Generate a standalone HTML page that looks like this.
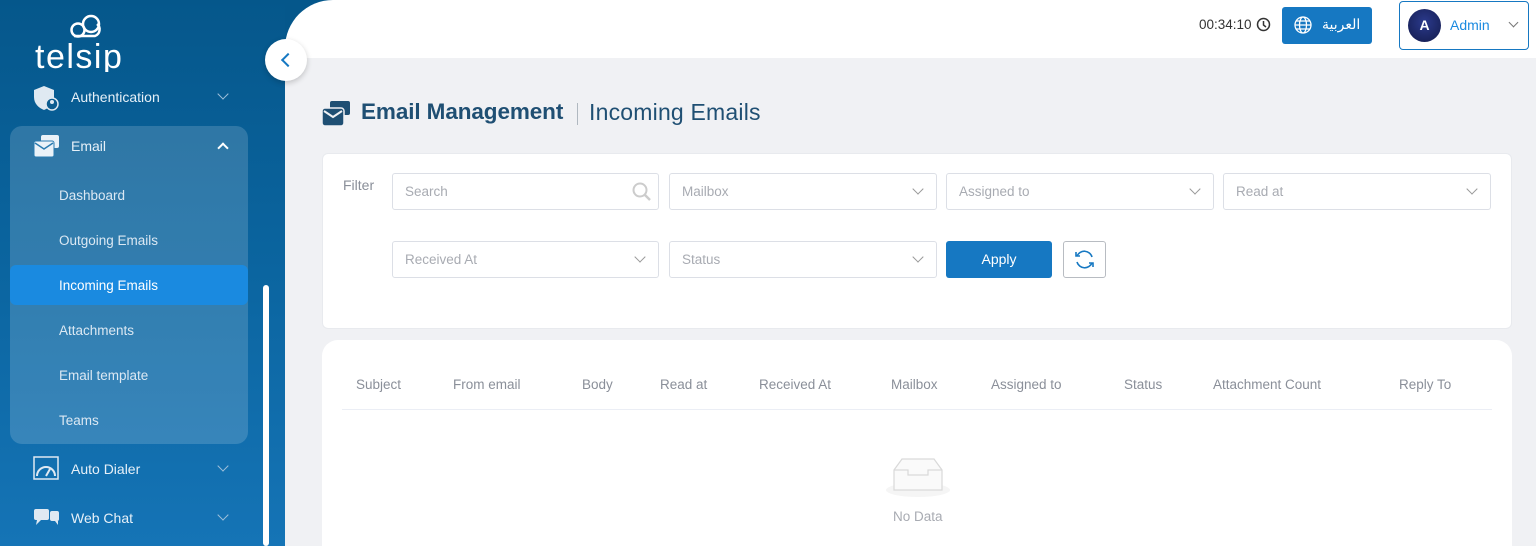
<!DOCTYPE html><html><head><meta charset="utf-8"><style>
*{box-sizing:border-box;margin:0;padding:0}
html,body{width:1536px;height:546px;overflow:hidden}
body{background:#f0f1f4;font-family:"Liberation Sans","Noto Sans CJK SC",sans-serif;position:relative}
.sb{position:absolute;left:0;top:0;width:285px;height:546px;background:linear-gradient(180deg,#05578b 0%,#0b65a0 50%,#1574b6 100%)}
.hdr{position:absolute;left:285px;top:0;width:1251px;height:58px;background:#fff;border-top-left-radius:48px}
.abs{position:absolute}
.mi{position:absolute;left:71px;color:#e6f0f8;font-size:14px}
.chev{position:absolute;left:219px;width:8px;height:8px;border-right:1.5px solid #9fc0da;border-bottom:1.5px solid #9fc0da;transform:rotate(45deg)}
.sub{position:absolute;left:59px;color:#dbe8f3;font-size:13.5px}
.inp{position:absolute;height:37px;border:1px solid #dcdfe6;border-radius:3px;background:#fff;color:#a8abb2;font-size:13.5px;padding:10px 12px}
.inp .c{position:absolute;right:14px;top:11px;width:8px;height:8px;border-right:1px solid #999;border-bottom:1px solid #999;transform:rotate(45deg)}
.th{position:absolute;top:377px;color:#8a8f99;font-size:13.5px}
</style></head><body>
<div class="sb"></div>
<div class="abs" style="left:285px;top:0;width:50px;height:58px;background:#05578b"></div>
<div class="hdr"></div>
<!-- logo -->
<svg class="abs" style="left:30px;top:12px" width="110" height="60" viewBox="0 0 110 60"><g fill="none" stroke="#fff" stroke-width="2.5"><circle cx="48" cy="18" r="6.5"/><circle cx="61" cy="12" r="8"/><path d="M44 24h21a7 7 0 0 0 2-12"/></g><text x="5" y="56" fill="#fff" font-size="34" font-family="Liberation Sans" letter-spacing="1.5">telsip</text></svg>
<!-- collapse -->
<div class="abs" style="left:265px;top:39px;width:42px;height:42px;border-radius:50%;background:#fff;box-shadow:0 2px 6px rgba(0,0,0,.2)"></div>
<div class="abs" style="left:283px;top:55px;width:10px;height:10px;border-left:2px solid #1678c2;border-bottom:2px solid #1678c2;transform:rotate(45deg)"></div>
<!-- menu -->
<svg class="abs" style="left:33px;top:85px" width="26" height="26"><path d="M11 1l10 4v7c0 7-5 11-10 13C6 23 1 19 1 12V5z" fill="#dfe9f2"/><circle cx="19" cy="19" r="6" fill="#0c5c90" stroke="#dfe9f2" stroke-width="1.5"/><circle cx="19" cy="17" r="2" fill="#dfe9f2"/></svg>
<div class="mi" style="top:89px">Authentication</div><div class="chev" style="top:90px"></div>
<div class="abs" style="left:10px;top:126px;width:238px;height:318px;border-radius:12px;background:rgba(255,255,255,.16)"></div>
<svg class="abs" style="left:33px;top:134px" width="27" height="25"><rect x="8" y="1" width="18" height="13" rx="2" fill="#eaf2f8"/><rect x="1" y="7" width="20" height="16" rx="2" fill="#eaf2f8" stroke="#2a7bb0"/><path d="M2 9l9 6 9-6" stroke="#2a7bb0" fill="none" stroke-width="1.5"/></svg>
<div class="mi" style="top:138px">Email</div><div class="abs" style="left:219px;top:144px;width:8px;height:8px;border-left:2px solid #fff;border-top:2px solid #fff;transform:rotate(45deg)"></div>
<div class="sub" style="top:188px">Dashboard</div>
<div class="sub" style="top:233px">Outgoing Emails</div>
<div class="abs" style="left:10px;top:265px;width:238px;height:40px;border-radius:6px;background:#1a8ae0"></div>
<div class="sub" style="top:278px;color:#fff">Incoming Emails</div>
<div class="sub" style="top:323px">Attachments</div>
<div class="sub" style="top:368px">Email template</div>
<div class="sub" style="top:413px">Teams</div>
<svg class="abs" style="left:33px;top:456px" width="26" height="26"><rect x="1" y="1" width="24" height="22" fill="none" stroke="#dfe9f2" stroke-width="1.5"/><path d="M4 20a9 9 0 0 1 18 0" fill="none" stroke="#dfe9f2" stroke-width="2"/><path d="M13 20l4-7" stroke="#dfe9f2" stroke-width="2"/></svg>
<div class="mi" style="top:461px">Auto Dialer</div><div class="chev" style="top:462px"></div>
<svg class="abs" style="left:33px;top:507px" width="27" height="22"><rect x="1" y="2" width="15" height="11" rx="2" fill="#dfe9f2"/><path d="M4 13l-1 5 5-5z" fill="#dfe9f2"/><rect x="17" y="4" width="9" height="10" rx="2" fill="#dfe9f2"/><path d="M22 14l3 4v-4z" fill="#dfe9f2"/></svg>
<div class="mi" style="top:510px">Web Chat</div><div class="chev" style="top:511px"></div>
<div class="abs" style="left:263px;top:285px;width:6px;height:261px;background:#fff;border-radius:3px"></div>
<!-- header right -->
<div class="abs" style="left:1199px;top:17px;font-size:13.5px;color:#333">00:34:10</div>
<svg class="abs" style="left:1256px;top:17px" width="15" height="15"><circle cx="7.5" cy="7.5" r="6" fill="none" stroke="#333" stroke-width="1.5"/><path d="M7.5 4v4l2.5 2" stroke="#333" fill="none" stroke-width="1.5"/></svg>
<div class="abs" style="left:1282px;top:7px;width:90px;height:37px;background:#1678c2;border-radius:3px"></div>
<svg class="abs" style="left:1294px;top:16px" width="18" height="18"><g fill="none" stroke="#fff" stroke-width="1.3"><circle cx="9" cy="9" r="8"/><ellipse cx="9" cy="9" rx="3.5" ry="8"/><path d="M1 9h16M2 5h14M2 13h14"/></g></svg>
<div class="abs" style="left:1322px;top:16px;color:#fff;font-size:14px">العربية</div>
<div class="abs" style="left:1399px;top:1px;width:130px;height:49px;border:1px solid #1678c2;border-radius:4px;background:#fff"></div>
<div class="abs" style="left:1408px;top:9px;width:33px;height:33px;border-radius:50%;background:radial-gradient(circle at 50% 40%,#2b3a8c,#121a4a);color:#fff;font-weight:bold;font-size:14px;text-align:center;line-height:33px">A</div>
<div class="abs" style="left:1450px;top:17px;color:#1a8ae0;font-size:14px">Admin</div>
<div class="abs" style="left:1510px;top:19px;width:7px;height:7px;border-right:1px solid #777;border-bottom:1px solid #777;transform:rotate(45deg)"></div>
<!-- title -->
<svg class="abs" style="left:321px;top:100px" width="30" height="28"><rect x="9" y="1" width="20" height="14" rx="2" fill="#1f4f73"/><rect x="1" y="8" width="22" height="18" rx="3" fill="#1f4f73" stroke="#f0f1f4" stroke-width="1.5"/><path d="M3 11l9 6 9-6" stroke="#f0f1f4" fill="none" stroke-width="2"/></svg>
<div class="abs" style="left:361px;top:99px;font-size:22.5px;font-weight:bold;color:#1f4f73;letter-spacing:-.1px">Email Management</div>
<div class="abs" style="left:577px;top:103px;width:1px;height:22px;background:#b0b8c0"></div>
<div class="abs" style="left:589px;top:99px;font-size:23px;color:#1f4f73;letter-spacing:.2px">Incoming Emails</div>
<!-- filter card -->
<div class="abs" style="left:322px;top:153px;width:1190px;height:176px;background:#fff;border-radius:6px;border:1px solid #e8eaee"></div>
<div class="abs" style="left:343px;top:177px;color:#8a8f99;font-size:14px">Filter</div>
<div class="inp" style="left:392px;top:173px;width:267px">Search<svg style="position:absolute;right:6px;top:8px" width="20" height="20"><circle cx="8" cy="8" r="6.5" fill="none" stroke="#ccc" stroke-width="2"/><path d="M13 13l5 5" stroke="#ccc" stroke-width="2.5"/></svg></div>
<div class="inp" style="left:669px;top:173px;width:268px">Mailbox<i class="c"></i></div>
<div class="inp" style="left:946px;top:173px;width:268px">Assigned to<i class="c"></i></div>
<div class="inp" style="left:1223px;top:173px;width:268px">Read at<i class="c"></i></div>
<div class="inp" style="left:392px;top:241px;width:267px">Received At<i class="c"></i></div>
<div class="inp" style="left:669px;top:241px;width:268px">Status<i class="c"></i></div>
<div class="abs" style="left:946px;top:241px;width:106px;height:37px;background:#1678c2;border-radius:3px;color:#fff;font-size:14px;text-align:center;line-height:37px">Apply</div>
<div class="abs" style="left:1063px;top:241px;width:43px;height:37px;border:1px solid #b8bcc2;border-radius:3px;background:#fff"></div>
<svg class="abs" style="left:1073px;top:248px" width="23" height="23"><g fill="none" stroke="#1678c2" stroke-width="1.6"><path d="M19 9a8 8 0 0 0-15-1"/><path d="M4 14a8 8 0 0 0 15 1"/><path d="M3 4v4h4M20 19v-4h-4"/></g></svg>
<!-- table -->
<div class="abs" style="left:322px;top:340px;width:1190px;height:206px;background:#fff;border-radius:16px 16px 0 0"></div>
<div class="th" style="left:356px">Subject</div><div class="th" style="left:453px">From email</div><div class="th" style="left:582px">Body</div><div class="th" style="left:660px">Read at</div><div class="th" style="left:759px">Received At</div><div class="th" style="left:891px">Mailbox</div><div class="th" style="left:991px">Assigned to</div><div class="th" style="left:1124px">Status</div><div class="th" style="left:1213px">Attachment Count</div><div class="th" style="left:1399px">Reply To</div>
<div class="abs" style="left:342px;top:409px;width:1150px;height:1px;background:#ebeef5"></div>
<div class="abs" style="left:886px;top:483px;width:64px;height:14px;border-radius:50%;background:#f5f5f5"></div>
<svg class="abs" style="left:892px;top:457px" width="52" height="36"><path d="M2 13L10 2h32l8 11v20H2z" fill="#fafafa" stroke="#d9d9d9" stroke-width="1.2"/><path d="M2 13h14v5h20v-5h14" fill="none" stroke="#d9d9d9" stroke-width="1.2"/></svg>
<div class="abs" style="left:893px;top:509px;color:#a8abb2;font-size:13.5px">No Data</div>
</body></html>
